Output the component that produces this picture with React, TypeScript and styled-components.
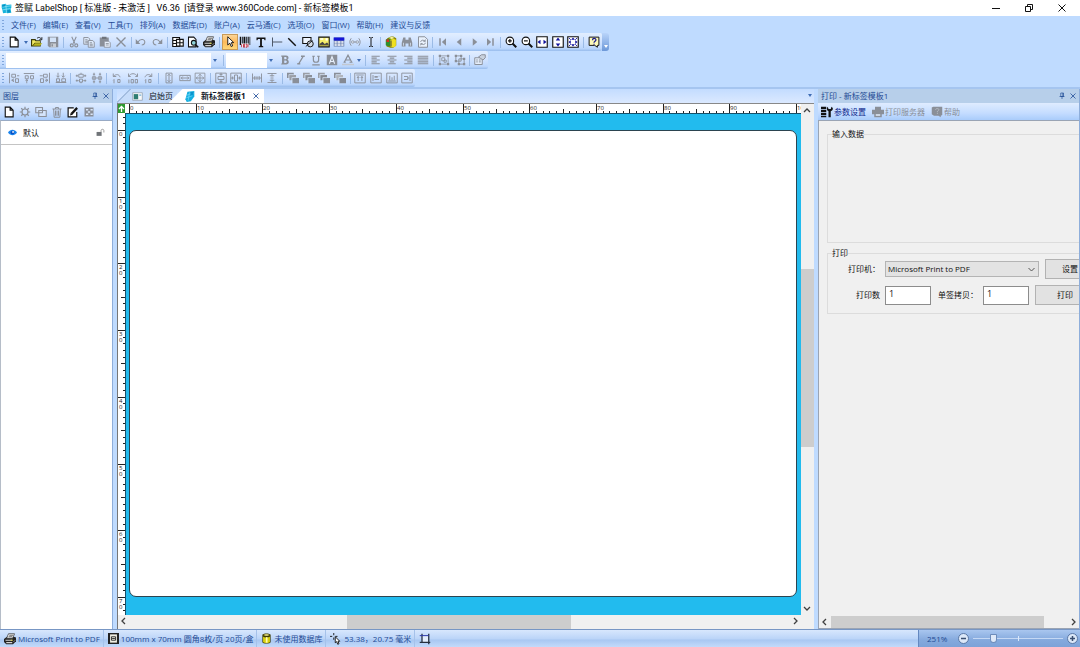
import React, { ReactNode } from 'react';
import styled, { createGlobalStyle } from 'styled-components';

const uiFont = `"Open Sans", "Noto Sans CJK SC", sans-serif`;
const titleFont = `Roboto, "Noto Sans CJK SC", sans-serif`;
const ink = '#1e4a94';

const GlobalStyle = createGlobalStyle`
  * { box-sizing: border-box; }
  html, body { margin: 0; padding: 0; }
  body { font: 8px/12px ${uiFont}; color: #111; background: #bfdbff; overflow: hidden; }
  button, input, select { font: inherit; color: inherit; margin: 0; padding: 0; border-radius: 0; }
  button { border: 0; background: none; cursor: default; }
`;

/* ---------- icons, drawn on a 16 x 16 grid ---------- */

const g = '#8a8f98';
const k = '#111';
const S = (d: string, c = g, w = 1.4) => <path d={d} stroke={c} strokeWidth={w} fill="none" />;
const F = (d: string, c = g) => <path d={d} fill={c} />;

const stackShape = (a: string, b: string, c: string) => (
  <>
    {F('M0 1h9v7H0z', a)}
    {F('M3 4h9v7H3z', b)}
    {F('M7 8h9v7H7z', c)}
    {S('M2.500 11V3.500H9M6.500 15V7.500H12', '#dbe9fc', 1)}
  </>
);

const icons: Record<string, ReactNode> = {
  newDoc: <path d="M3 1.5h6.5l4 4v9H3zM9.500 1.500v4h4" fill="#fff" stroke={k} strokeWidth="1.5" />,
  open: (
    <>
      {F('M0 4h6l1 1.500h6V14H0z', '#3b3a08')}
      {F('M1.500 5.500h3.500l1 1.500h6v2H5l-3.500 4z', '#f2ea62')}
      {F('M5.500 9.500H15L12 13H2.500z', '#b7b31c')}
      {S('M8 3c2-2 5-1 6 1.500M14.500 1.500V5H11', k, 1.1)}
    </>
  ),
  save: (
    <>
      {F('M1 1h14v14H3l-2-2z')}
      {F('M4 2h8v6H4z', '#d3e3f8')}
      {F('M5 10h7v5H5z', '#c9cdd3')}
      {F('M6 11h2v3H6z')}
    </>
  ),
  cut: (
    <>
      {S('M5 1l4 9M11 1L7 10')}
      <circle cx="5" cy="12.500" r="2" fill="none" stroke={g} strokeWidth="1.500" />
      <circle cx="11" cy="12.500" r="2" fill="none" stroke={g} strokeWidth="1.500" />
    </>
  ),
  copy: (
    <>
      <path d="M1 2h6l2 2v7H1zM3 5h3M3 7h4M3 9h4" fill="#dce8f8" stroke={g} strokeWidth="1.200" />
      <path d="M7 6h6l2 2v7H7zM9 9h3M9 11h4M9 13h4" fill="#dce8f8" stroke={g} strokeWidth="1.200" />
    </>
  ),
  paste: (
    <>
      {F('M1 2h12v12H1z')}
      {F('M4 1h6v3H4z', '#6f747c')}
      <path d="M7 7h6l2 2v6H7zM9 10h4M9 12h4" fill="#e6eef9" stroke={g} strokeWidth="1.100" />
    </>
  ),
  del: S('M2 2l12 12M14 2L2 14', g, 1.8),
  undo: (
    <>
      {S('M4 8c3-5 10-4 9 1-.5 2-2 3-4 3')}
      {F('M1 4v6.500h6z')}
    </>
  ),
  redo: (
    <>
      {S('M12 8C9 3 2 4 3 9c.5 2 2 3 4 3')}
      {F('M15 4v6.500H9z')}
    </>
  ),
  database: (
    <>
      <path d="M1 2h9v12H1zM1 6h9M1 10h9" fill="#fff" stroke={k} strokeWidth="1.500" />
      <path d="M6 4.500h9v9H6zM6 9h9M10.500 4.500v9" fill="#fff" stroke={k} strokeWidth="1.500" />
    </>
  ),
  preview: (
    <>
      <path d="M2 1.500h7l3 3v10H2z" fill="#fff" stroke={k} strokeWidth="1.400" />
      <circle cx="9" cy="9" r="3.200" fill="#8fd3d8" stroke={k} strokeWidth="1.400" />
      {S('M11 11.500l4 3.500', k, 2.2)}
    </>
  ),
  printer: (
    <>
      {F('M0 8l4-3h9l3 1v5l-4 4H3l-3-3z', '#222')}
      {F('M6 1h8l-2.500 6H3.500z', '#fff')}
      {S('M6 1h8l-2.500 6H3.500zM7 3h5M6 5h5', '#333', 1)}
      {F('M2 9h9v1.200H2zM3 12h8v1.500H3z', '#d4d4d4')}
      {F('M9 9h2.500v1.200H9z', '#e8e13a')}
      {S('M12.500 12l2.500-2.500', '#aaa', 1)}
    </>
  ),
  pointer: <path d="M5 1v11l2.800-2.500L9.500 14l2-.8-1.700-4.400H13z" fill="#fff" stroke={k} strokeWidth="1.200" />,
  barcode: (
    <>
      {F('M1 1h2v11H1zM4 1h1v11H4zM6 1h2.500v11H6zM9.500 1h1v11h-1zM11.500 1h1.500v11h-1.500zM14 1h1v11h-1z', k)}
      {F('M3 10h10v5H3z', '#fff')}
      {S('M3.500 11v4M6 11h1.500v4H6zM9 11h1.500v4H9M12 11v4', '#b0122a', 1.1)}
    </>
  ),
  text: F('M2 2h12v3.500h-1.200L12 4H9.200v9l1.800.8V15H5v-1.200L6.800 13V4H4l-.8 1.500H2z', k),
  hline: S('M2 2v12M2 8h13', '#4a5566', 1.3),
  line: S('M3 3l10 10', k, 1.8),
  shapes: (
    <>
      <path d="M1 2h11v8H1z" fill="#eef5ff" stroke={k} strokeWidth="1.400" />
      <circle cx="11" cy="10.500" r="4" fill="#d5dde8" stroke={k} strokeWidth="1.300" />
      {S('M5 14L14 6', k, 1.2)}
    </>
  ),
  image: (
    <>
      <path d="M1 1.500h14v13H1z" fill="#f5ee6a" stroke={k} strokeWidth="1.400" />
      {F('M2 13.500v-3l4-3 3 3 3-2 2 2v3z', '#444')}
      {F('M3 3h4v2H3zM10 3h3v3h-3z', '#fff')}
      {S('M2.500 12.500h11', '#d8d040', 1)}
    </>
  ),
  table: (
    <>
      {F('M1 2h14v12H1z', '#6078a8')}
      {F('M1 2h14v4H1z', '#1414d8')}
      {F('M2 7h3v2H2zM6 7h4v2H6zM11 7h3v2h-3zM2 10h3v1.500H2zM6 10h4v1.500H6zM11 10h3v1.500h-3zM2 12.300h3v1H2zM6 12.300h4v1H6zM11 12.300h3v1h-3z', '#fff')}
    </>
  ),
  link: (
    <>
      {S('M3 3C.5 6 .5 10 3 13M13 3c2.500 3 2.500 7 0 10M5 8h6', g, 1.2)}
      <circle cx="5" cy="8" r="1.700" fill="#dfeafa" stroke={g} />
      <circle cx="11" cy="8" r="1.700" fill="#dfeafa" stroke={g} />
    </>
  ),
  caret: S('M5.500 2h1.500l1 1 1-1h1.500M8 3v10M5.500 14h1.500l1-1 1 1h1.500', k, 1.3),
  db: (
    <>
      {F('M3 3l5-2.500h3L15 3v9.500L11 15.500H7L2 14z', '#8a8700')}
      {F('M1 5c0-2 8-2 8 0v7c0 2-8 2-8 0z', '#2f8f2f')}
      {F('M7 5c2-1.500 6-1.500 7.500 0v8c-2 2.500-5 2.500-7.500 1z', '#f0e020')}
      {F('M5 2.500l4-1.500 4 1.500-4 1.500z', '#f8f4a0')}
      {F('M2 4.500h3.500v3.500H2z', '#d83020')}
      {S('M8 6v8', '#333', 1.2)}
    </>
  ),
  find: (
    <>
      {F('M3 2h3v3h4V2h3l2 7v5h-5v-4H6v4H1V9z')}
      {F('M3 9h1v4H3zM12 9h1v4h-1z', '#dce8f8')}
    </>
  ),
  refresh: (
    <>
      <path d="M2 1h8.500L14 4.500V15H2z" fill="#e9f1fc" stroke={g} strokeWidth="1.300" />
      {S('M5 8c0-3 4-3 5-1M11 9c0 3-4 3-5 1', g, 1.3)}
      {F('M8 7.500h3.500V4zM8 9.500H4.500V13z')}
    </>
  ),
  first: F('M3 3h2v10H3zM12 3v10L6.500 8z'),
  prev: F('M11 3v10L5 8z'),
  next: F('M5 3v10l6-5z'),
  last: F('M11 3h2v10h-2zM4 3v10l5.500-5z'),
  zoomIn: (
    <>
      <circle cx="6.500" cy="6.500" r="5" fill="#fff" stroke={k} strokeWidth="1.500" />
      {S('M4 6.500h5M6.500 4v5', k, 1.6)}
      {S('M10 10l5 5', k, 2.6)}
    </>
  ),
  zoomOut: (
    <>
      <circle cx="6.500" cy="6.500" r="5" fill="#fff" stroke={k} strokeWidth="1.500" />
      {S('M4 6.500h5', k, 1.6)}
      {S('M10 10l5 5', k, 2.6)}
    </>
  ),
  fitWidth: (
    <>
      <path d="M1 1h14v14H1z" fill="#fff" stroke={k} strokeWidth="1.500" />
      {F('M2 8l4-3v6zM14 8l-4-3v6z', '#10109c')}
    </>
  ),
  fitHeight: (
    <>
      <path d="M1 1h14v14H1z" fill="#fff" stroke={k} strokeWidth="1.500" />
      {F('M8 2l3 4H5zM8 14l3-4H5z', '#10109c')}
    </>
  ),
  fitAll: (
    <>
      <path d="M1 1h14v14H1z" fill="#fff" stroke={k} strokeWidth="1.500" />
      {F('M8 2l2.500 3h-5zM8 14l2.500-3h-5zM2 8l3-2.500v5zM14 8l-3-2.500v5z', '#10109c')}
      {S('M2.500 2.500l2.500 2.500M13.500 2.500L11 5M2.500 13.500L5 11M13.500 13.500L11 11', '#10109c', 1.2)}
    </>
  ),
  help: (
    <>
      <path d="M1.500 1.500h13v11h-2V15L9 12.500H1.500z" fill="#fdf9b8" stroke={k} strokeWidth="1.300" />
      {S('M6 5.500c0-3 5-3 4.500 0C10.300 7 8 7 8 9M8 10.200v1.600', '#1a1a90', 1.7)}
    </>
  ),
  bold: F('M3 2h6.500c4 0 4 5 1.500 5.600 3 .7 3 6.400-1.500 6.400H3v-1.500h1v-9H3zM7 4v3h2c1.500 0 1.500-3 0-3zm0 4.800V12h2c2 0 2-3.200 0-3.200z'),
  italic: S('M8 3h5M11 3L5 13M3 13h4', g, 1.8),
  underline: S('M3 3h3.500M9.500 3H13M4.500 3v5c0 4 7 4 7 0V3M3 14.500h10', g, 1.6),
  reverse: (
    <>
      {F('M1 1h14v14H1z')}
      {S('M4.500 13L8 3.500l3.500 9.500M5.500 10h5', '#e8f0fb', 1.5)}
    </>
  ),
  color: (
    <>
      {S('M3 11L8 1.500l5 9.500M5 8h6M2 11h3M10 11h4', g, 1.6)}
      {F('M0 13h16v2H0z', '#c3c8d0')}
    </>
  ),
  alignL: S('M2 3h11M2 5.500h7M2 8h11M2 10.500h7M2 13h11'),
  alignC: S('M2 3h12M5 5.500h6M2 8h12M5 10.500h6M3 13h10'),
  alignR: S('M3 3h11M7 5.500h7M3 8h11M7 10.500h7M3 13h11'),
  alignJ: S('M1 3h14M1 5.500h14M1 8h14M1 10.500h14M1 13h14'),
  group: (
    <>
      {S('M2.500 2.500h11v11h-11z', g, 1)}
      {F('M1 1h3v3H1zM12 1h3v3h-3zM1 12h3v3H1zM12 12h3v3h-3z')}
      {S('M5 5h4v4H5zM8 8h3v3H8z', g, 1.1)}
    </>
  ),
  ungroup: (
    <>
      {S('M2.500 2.500h7v7h-7zM6.500 6.500h7v7h-7z', g, 1.2)}
      {F('M1 1h3v3H1zM8 1h3v3H8zM1 8h3v3H1zM12 5h3v3h-3zM5 12h3v3H5zM12 12h3v3h-3z')}
    </>
  ),
  props: (
    <>
      <path d="M1 5h10v9H1zM3 8h2M6.500 8H9M3 10.500h2M6.500 10.500H9" fill="#e5eefb" stroke={g} strokeWidth="1.300" />
      <path d="M6 4l4-3h5v4l-3 3-3-2z" fill="#c9d2de" stroke={g} strokeWidth="1.300" />
    </>
  ),
  oLeft: S('M2 1v14M5 3h5v4H5zM5 11h3M12 5h3M10 9v5h4V9zM8 9l-3 2 3 2', g, 1.2),
  oTop: S('M1 2h14M3 5h4v4H3zM10 5h4v4h-4zM5 10v5M12 10v5M3.500 12L5 10l1.500 2', g, 1.2),
  oRight: S('M14 1v14M6 3h5v4H6zM1 5h4M8 11h4M2 9h4v5H2zM9 9l3 2-3 2', g, 1.2),
  oBottom: S('M1 14h14M2 9h4v4H2zM9 9h5v4H9zM4 1v6M11 1v6M2 5l2 2 2-2M9 5l2 2 2-2', g, 1.2),
  oCenterH: S('M8 1v2M8 13v2M5 3h6v4H5zM1 5h3M12 5h3M6 9.500h4v4H6zM1 11.500h4M11 11.500h4M2.500 3.500v3M13.500 3.500v3M2.500 10v3M13.500 10v3', g, 1.2),
  oCenterV: S('M1 8h14M2.500 5.500h3v5h-3zM10.500 5.500h3v5h-3zM4 1v3M12 1v3M4 12v3M12 12v3M2.500 3h3M10.500 3h3M2.500 13h3M10.500 13h3', g, 1.2),
  rot90: S('M3 2v4h4M3 6c4-4 8-3 9 1M4 10v5M3 11l1-1M9 10h3v4H9z', g, 1.2),
  rot180: S('M2 2v4h3M14 2v4h-3M2 6c3-5 9-5 12 0M2.500 10v5M5.500 10h3v4.500h-3zM11 10h3v4.500h-3z', g, 1.2),
  rot270: S('M13 2v4H9M13 6C10 2 5 3 4 7M5 10v5M4 11l1-1M9 10h3v4H9z', g, 1.2),
  sameH: S('M4 1.500h8v13H4zM8 3v10M6 5l2-2 2 2M6 11l2 2 2-2', g, 1.2),
  sameW: S('M1 4.500h14v7H1zM3 8h10M5 6L3 8l2 2M11 6l2 2-2 2', g, 1.2),
  sameBoth: S('M1.500 1.500h13v13h-13zM8 3v10M3 8h10M6 5l2-2 2 2M6 11l2 2 2-2M5 6L3 8l2 2M11 6l2 2-2 2', g, 1.1),
  pageH: S('M1 1.500h14v13H1zM4 6h8v4H4zM8 1v4M8 11v4M6 3.500h4M6 12.500h4', g, 1.2),
  pageV: S('M1 1.500h14v13H1zM6 4h4v8H6zM1 8h4M11 8h4M3.500 6v4M12.500 6v4', g, 1.2),
  spaceH: S('M2 2v12M14 2v12M2 8h4M10 8h4M5 5.500v5M11 5.500v5M7 6v4M9 6v4', g, 1.2),
  spaceV: S('M2 2h12M2 14h12M8 2v4M8 10v4M5 5h6M5 11h6M6 8h4', g, 1.2),
  front: stackShape('#8a8f98', '#9a9ea6', '#8a8f98'),
  back: stackShape('#9a9ea6', '#8a8f98', '#8a8f98'),
  forward: stackShape('#9a9ea6', '#848992', '#8a8f98'),
  backward: stackShape('#8a8f98', '#b0b4bb', '#848992'),
  pTop: S('M1 1.500h14v13H1zM3 4h10M5.500 12V6M10.500 12V6M4 8l1.500-2L7 8M9 8l1.500-2L12 8', g, 1.2),
  pLeft: S('M1 1.500h14v13H1zM4 4v8M6 6h4v1H6M6 10h6M12 5v1', g, 1.2),
  pBottom: S('M1 1.500h14v13H1zM3 12h10M5 5v6M8 7v4M11 5v6', g, 1.2),
  pRight: S('M1 1.500h14v13H1zM12 4v8M4 6h5v4H4M9 8h2', g, 1.2),
  gear: (
    <>
      <circle cx="8" cy="8" r="4" fill="none" stroke={g} strokeWidth="1.600" />
      {S('M8 1v3M8 12v3M1 8h3M12 8h3M3 3l2 2M11 11l2 2M13 3l-2 2M5 11l-2 2', g, 1.6)}
    </>
  ),
  dup: <path d="M1 2h9v7H1zM5 6h10v8H5z" fill="#d4e4fb" stroke={g} strokeWidth="1.400" />,
  trash: S('M2 4h12M6 4V2h4v2M3.500 4l.7 11h7.600l.7-11M6 6v7M8 6v7M10 6v7', g, 1.3),
  edit: (
    <>
      <path d="M13 8v6.500H1.500v-12H9" fill="#fff" stroke={k} strokeWidth="1.600" />
      {S('M6 10.500l7.500-8', k, 3)}
      {F('M4 12.500l1-3.500 2.500 2.500z', k)}
    </>
  ),
  checker: (
    <>
      {F('M2 2h12v12H2z')}
      {F('M4 4h3v2H4zM10 4h3v2h-3zM6.500 7h3v2h-3zM4 10h3v2H4zM10 10h3v2h-3z', '#d9e6f8')}
    </>
  ),
  eye: (
    <>
      {F('M0 8c4-6.500 12-6.500 16 0-4 6.500-12 6.500-16 0z', '#1c86ee')}
      <circle cx="8" cy="8" r="3.300" fill="#0a4ec0" />
      <circle cx="9" cy="7" r="1.600" fill="#fff" />
    </>
  ),
  unlock: (
    <>
      {F('M1 7h9v7H1z', '#707478')}
      {S('M9 7V4.500c0-3 5-3 5 0V8', '#888', 1.4)}
    </>
  ),
  pin: S('M5.500 2H11v7H5.500zM3 9h10M8 9v5M9.500 2v7', ink, 1.3),
  close: S('M3 3l10 10M13 3L3 13', '#3a62a4', 1.9),
  logo: (
    <>
      {F('M1 2l6-1 1 2 7-1v5l-1 2 1 5-6 1-1-1-5 1-1-5-1-3z', '#16b3dc')}
      {S('M2 6l6-1 7-1M2 10l12-2M7 2l1 12', '#a8ecfa', .9)}
      {F('M2 3l4-.5.500 2-4.500.8zM9 10.500l4-.7.5 3.500-4 .5z', '#0c8fc0')}
    </>
  ),
  tag: (
    <>
      {F('M5 1l10-1v8l-5 7-6 1-2-4z', '#14aee0')}
      {S('M4 6l10-3M3 10l9-3M8 2L6 14', '#7adcf8', .9)}
      {F('M10 1.500h4l-1 4-4 1z', '#0d93cc')}
    </>
  ),
  home: (
    <>
      <path d="M1 2.500h14v11H1z" fill="#f8f8f8" stroke="#8b97a8" />
      {F('M2.500 4.500H9v7.500H2.500z', '#2f7d72')}
      {F('M10.500 5h3v2h-3z', '#7fb6d8')}
    </>
  ),
  params: (
    <>
      {F('M0 1h7v3H0zM0 5h7v3H0zM0 9h7v3H0zM0 13h7v2H0z', k)}
      {F('M9 1l1 3h3l1-3c3 2 2 5-1 6V15h-3V7C7.500 6 7 3 9 1z', k)}
    </>
  ),
  server: (
    <>
      {F('M4 1h8v4H4zM0 5h16v6H0zM3 9h10v6H3z')}
      {F('M5 11h6v2H5z', '#e1ecfb')}
    </>
  ),
  book: (
    <>
      {F('M1 2l2-1h12v11l-2 1v2l-3-2H4l-3-2z')}
      {S('M6 5c0-2 5-2 4.500 0-.5 1.500-2 1-2 3M8.500 9v1.500', '#b7bcc4', 1.2)}
    </>
  ),
  page: (
    <>
      {F('M0 0h16v16H0z', '#222')}
      {F('M3 2h10v12H3z', '#f0efe4')}
      {S('M5 5.500h6v5H5zM6 8h4', '#222', 1.3)}
    </>
  ),
  cylinder: (
    <>
      {F('M2 3c0-3 12-3 12 0v10c0 3-12 3-12 0z', '#3c3a04')}
      {F('M3 5c2 2 8 2 10 0v8c-2 2-8 2-10 0z', '#d8d010')}
      {F('M3.500 3c2-1.500 7-1.500 9 0-2 1.500-7 1.500-9 0z', '#f6f28a')}
      {F('M7 6h2.500v8H7z', '#fffbb0')}
    </>
  ),
  coords: (
    <>
      {S('M5 0v3M5 6v3M0 4.500h3M7 4.500h3', k, 1.2)}
      <path d="M7 5v8l2-1.500 1.300 3.500 1.700-.7-1.300-3.300H13z" fill="#fff" stroke={k} strokeWidth="1.200" />
    </>
  ),
  frame: (
    <>
      <path d="M4 3.500h9v9H4z" fill="#e4eefc" />
      {S('M4 1v12M13 1v14M1 12.500h14', '#26303e', 1.7)}
      {S('M1 3.500h12', '#2a35a8', 1.3)}
    </>
  ),
};

const Svg = styled.svg<{ $size: number }>`
  display: block;
  flex: none;
  width: ${(p) => p.$size}px;
  height: ${(p) => p.$size}px;
`;
const Icon = ({ name, size = 12 }: { name: string; size?: number }) => (
  <Svg $size={size} viewBox="0 0 16 16" aria-hidden="true">
    {icons[name]}
  </Svg>
);

/* ---------- window frame ---------- */

const Window = styled.div`
  height: 100vh;
  display: flex;
  flex-direction: column;
  overflow: hidden;
`;
const TitleBar = styled.header`
  height: 16px;
  flex: none;
  display: flex;
  align-items: center;
  padding: 0 2px 0 1px;
  background: #fff;
  font: 9px/16px ${titleFont};
`;
const Title = styled.h1`
  flex: 1;
  margin: 0;
  padding-left: 3px;
  font: inherit;
  white-space: pre;
  color: #000;
`;
const CaptionButton = styled.button`
  width: 33px;
  height: 16px;
  display: grid;
  place-items: center;
`;
const MenuBar = styled.nav`
  height: 17px;
  flex: none;
  display: flex;
  align-items: center;
  gap: 7px;
  padding: 1px 0 0 2px;
`;
const MenuButton = styled.button`
  color: ${ink};
  white-space: nowrap;
`;
const Grip = styled.span`
  width: 2px;
  height: 10px;
  flex: none;
  background: repeating-linear-gradient(#7fa6dc 0 1px, transparent 1px 3px);
`;
const ToolbarRow = styled.div`
  height: 18px;
  flex: none;
  display: flex;
`;
const Toolbar = styled.div<{ $width: number }>`
  width: ${(p) => p.$width}px;
  display: flex;
  align-items: center;
  padding-left: 2px;
  background: linear-gradient(#e2eeff, #cfe2ff 50%, #bcd7fd 85%, #98bcec);
  border-radius: 0 2px 2px 0;
  ${Grip} { margin-right: 2px; }
`;
const ToolButton = styled.button<{ $active?: boolean }>`
  flex: 1 1 0;
  min-width: 0;
  height: 16px;
  display: grid;
  place-items: center;
  ${(p) =>
    p.$active &&
    `background: linear-gradient(#fbd9a0, #fdb95a 50%, #fddc7e); box-shadow: inset 0 0 0 1px #c89a58;`}
`;
const Divider = styled.span`
  width: 1px;
  height: 11px;
  flex: none;
  margin: 0 2px;
  background: #9bbbe6;
`;
const Triangle = styled.span<{ $color?: string }>`
  display: block;
  border: 2px solid transparent;
  border-top: 3px solid ${(p) => p.$color ?? '#3f6db5'};
  border-bottom: 0;
`;
const DropButton = styled.button`
  width: 8px;
  height: 16px;
  flex: none;
  display: grid;
  place-items: center;
`;
const OverflowCap = styled.button`
  width: 7px;
  height: 18px;
  display: flex;
  flex-direction: column;
  justify-content: flex-end;
  align-items: center;
  padding-bottom: 3px;
  background: linear-gradient(#b9d4fa, #6c98d8);
  border-radius: 0 3px 3px 0;
`;
const Combo = styled.div<{ $width: number }>`
  width: ${(p) => p.$width}px;
  height: 15px;
  flex: none;
  display: flex;
  margin-right: 2px;
`;
const ComboInput = styled.input`
  flex: 1;
  min-width: 0;
  border: 0;
  background: #fff;
`;

/* ---------- panels ---------- */

const Workspace = styled.main`
  flex: 1;
  min-height: 0;
  display: flex;
  gap: 4px;
  border-top: 2px solid #a5c5f0;
`;
const Panel = styled.section<{ $width: number }>`
  width: ${(p) => p.$width}px;
  flex: none;
  min-width: 0;
  display: flex;
  flex-direction: column;
  border-right: 1px solid #8eaedb;
`;
const PanelHead = styled.header`
  height: 14px;
  flex: none;
  display: flex;
  align-items: center;
  gap: 3px;
  padding: 0 2px 0 3px;
  background: #b7cfea;
  color: ${ink};
`;
const PanelTitle = styled.h2`
  flex: 1;
  margin: 0;
  font: inherit;
`;
const MiniButton = styled.button`
  width: 8px;
  height: 10px;
  display: grid;
  place-items: center;
`;
const PanelTools = styled.div<{ $gap: number }>`
  height: 17px;
  flex: none;
  display: flex;
  align-items: center;
  gap: ${(p) => p.$gap}px;
  padding: 0 3px;
  background: linear-gradient(#dfecff, #c4dcff 60%, #a9ccfb);
`;
const PanelTool = styled.button<{ $off?: boolean }>`
  display: flex;
  align-items: center;
  gap: 1px;
  color: ${(p) => (p.$off ? '#8a8f98' : '#10288c')};
`;
const LayerList = styled.ul`
  flex: 1;
  margin: 0;
  padding: 0;
  list-style: none;
  background: #fff;
  border-left: 1px solid #b5bdc8;
  border-top: 1px solid #98aac4;
`;
const LayerItem = styled.li`
  height: 24px;
  display: flex;
  align-items: center;
  padding: 0 7px;
  gap: 6px;
  border-bottom: 1px solid #c4c4c4;
`;
const LayerName = styled.span`
  flex: 1;
`;

/* ---------- document ---------- */

const Doc = styled.section`
  flex: 1;
  min-width: 0;
  display: flex;
  flex-direction: column;
`;
const TabStrip = styled.div`
  height: 14px;
  flex: none;
  display: flex;
  align-items: flex-end;
  background: linear-gradient(#c3dcff, #dbe9ff);
`;
const Tab = styled.button<{ $active?: boolean }>`
  height: 14px;
  display: flex;
  align-items: center;
  gap: 6px;
  padding: 0 4px 0 15px;
  color: #101828;
  font-weight: ${(p) => (p.$active ? 700 : 400)};
  background: ${(p) =>
    p.$active
      ? 'linear-gradient(135deg, transparent 9px, #fff 10px)'
      : 'linear-gradient(135deg, transparent 9px, #a3bde0 9px, #a3bde0 10px, #c6dcfa 10px)'};
  & + & { margin-left: -8px; }
`;
const TabSpacer = styled.span`
  flex: 1;
`;
const Sheet = styled.div`
  flex: 1;
  min-height: 0;
  display: grid;
  grid-template-columns: minmax(0, 1fr) 13px;
  grid-template-rows: minmax(0, 1fr) 14px;
  border-left: 1px solid #777;
  border-top: 1px solid #888;
  background: #f0f0f0;
`;
const Board = styled.div`
  display: grid;
  grid-template-columns: 7px minmax(0, 1fr);
  grid-template-rows: 9px minmax(0, 1fr);
  overflow: hidden;
  background: #fff;
`;
const Corner = styled.div`
  display: grid;
  place-items: center;
  background: #2f9a32;
`;
const RulerTop = styled.svg`
  width: 100%;
  height: 9px;
  display: block;
`;
const RulerSide = styled.svg`
  width: 7px;
  height: 100%;
  display: block;
`;
const Canvas = styled.div`
  display: flex;
  padding: 16px 4px 18px 3px;
  background: #22bbee;
  border-top: 1px solid #16506a;
  border-left: 1px solid #16506a;
`;
const Label = styled.div`
  flex: 1;
  background: #fff;
  border: 1px solid #2b4450;
  border-radius: 7px;
`;

const Scroll = styled.div<{ $vertical?: boolean }>`
  display: flex;
  flex-direction: ${(p) => (p.$vertical ? 'column' : 'row')};
  min-width: 0;
  min-height: 0;
  background: #f0f0f0;
`;
const ScrollArrow = styled.button`
  width: 12px;
  height: 12px;
  flex: none;
  display: grid;
  place-items: center;
`;
const Track = styled.div<{ $grow: number }>`
  flex: ${(p) => p.$grow} 1 0;
`;
const Thumb = styled(Track)`
  background: #cdcdcd;
`;

const arrows = { up: 'M1 6l3-3 3 3', down: 'M1 2l3 3 3-3', left: 'M5 1L2 4l3 3', right: 'M3 1l3 3-3 3' };
const Arrow = ({ dir }: { dir: keyof typeof arrows }) => (
  <ScrollArrow type="button" aria-label={dir}>
    <svg width="8" height="8" viewBox="0 0 8 8">
      <path d={arrows[dir]} fill="none" stroke="#404040" strokeWidth="1.3" />
    </svg>
  </ScrollArrow>
);
const ScrollBar = ({ vertical, parts }: { vertical?: boolean; parts: [number, number, number] }) => (
  <Scroll $vertical={vertical}>
    <Arrow dir={vertical ? 'up' : 'left'} />
    <Track $grow={parts[0]} />
    <Thumb $grow={parts[1]} />
    <Track $grow={parts[2]} />
    <Arrow dir={vertical ? 'down' : 'right'} />
  </Scroll>
);

/* ---------- print form ---------- */

const FormPane = styled.form`
  flex: 1;
  min-height: 0;
  display: flex;
  flex-direction: column;
  overflow: hidden;
  border: 1px solid #9aa4b4;
  border-right: 0;
  background: #f0f0f0;
`;
const FormBody = styled.div`
  flex: 1;
  min-height: 0;
  width: 300px;
  padding: 7px 8px;
`;
const Group = styled.fieldset<{ $height: number }>`
  height: ${(p) => p.$height}px;
  margin: 0 0 4px;
  padding: 0 0 0 8px;
  border: 1px solid #dcdcdc;
`;
const Legend = styled.legend`
  margin-left: -4px;
  padding: 0;
`;
const FormRow = styled.div`
  display: flex;
  align-items: center;
  height: 20px;
  margin-bottom: 6px;
`;
const FieldLabel = styled.label<{ $width: number }>`
  width: ${(p) => p.$width}px;
  flex: none;
  padding-right: 5px;
  text-align: right;
  white-space: nowrap;
`;
const PrinterSelect = styled.div`
  width: 154px;
  height: 16px;
  flex: none;
  display: flex;
  align-items: center;
  padding-right: 3px;
  border: 1px solid #b4b4b4;
  background: #e3e3e3;
  select {
    flex: 1;
    height: 14px;
    min-width: 0;
    padding-left: 2px;
    appearance: none;
    border: 0;
    background: none;
  }
`;
const NumberInput = styled.input`
  width: 46px;
  height: 19px;
  flex: none;
  padding: 0 3px 3px;
  border: 1px solid #8c8c8c;
  background: #fff;
  font-size: 9px;
`;
const PushButton = styled.button<{ $width: number }>`
  width: ${(p) => p.$width}px;
  height: 20px;
  flex: none;
  margin-left: 6px;
  border: 1px solid #b2b2b2;
  background: #e2e2e2;
`;

/* ---------- status bar ---------- */

const StatusBar = styled.footer`
  height: 18px;
  flex: none;
  display: flex;
  align-items: stretch;
  background: linear-gradient(#d8e7fd, #bcd5f8 50%, #a9c8f2 60%, #c3dafa);
  border-top: 1px solid #7796c4;
  color: ${ink};
`;
const StatusItem = styled.span`
  display: flex;
  align-items: center;
  gap: 2px;
  padding: 0 3px 0 4px;
  border-right: 1px solid #a5c2ea;
  white-space: nowrap;
  &:last-of-type { border-right: 0; }
`;
const ZoomBox = styled.label`
  width: 162px;
  margin-left: auto;
  display: flex;
  align-items: center;
  padding: 0 2px 0 8px;
  gap: 4px;
  background: linear-gradient(#a9c6ef, #84a9dd 60%, #7ca2d8);
  border-left: 1px solid #6488c0;
`;
const ZoomValue = styled.output`
  width: 27px;
`;
const RoundButton = styled.button`
  width: 11px;
  height: 11px;
  flex: none;
  display: grid;
  place-items: center;
  border: 1px solid #5a78a6;
  border-radius: 50%;
  background: #dce8f8;
`;
const ZoomRange = styled.input`
  flex: 1;
  min-width: 0;
  height: 12px;
  appearance: none;
  background:
    linear-gradient(#dbe8fa, #dbe8fa) 50% 50% / 1px 5px no-repeat,
    linear-gradient(#c5d8f4, #c5d8f4) 0 50% / 100% 1px no-repeat;
  &::-webkit-slider-thumb {
    appearance: none;
    width: 7px;
    height: 9px;
    border: 1px solid #6d8cba;
    border-radius: 1px 1px 4px 4px;
    background: #dfe9f8;
  }
`;

/* ---------- data ---------- */

const menus = ['文件(F)', '编辑(E)', '查看(V)', '工具(T)', '排列(A)', '数据库(D)', '账户(A)', '云马通(C)', '选项(O)', '窗口(W)', '帮助(H)', '建议与反馈'];
const mainTools =
  'newDoc > open save | cut copy paste del | undo redo | database preview printer | pointer barcode text hline line shapes image table link caret | db find refresh | first prev next last | zoomIn zoomOut fitWidth fitHeight fitAll | help';
const textTools = 'bold italic underline reverse color > | alignL alignC alignR alignJ | group ungroup | props';
const arrangeTools =
  'oLeft oTop oRight oBottom | oCenterH oCenterV | rot90 rot180 rot270 | sameH sameW sameBoth | pageH pageV | spaceH spaceV | front back forward backward | pTop pLeft pBottom pRight';
const layerTools = ['newDoc', 'gear', 'dup', 'trash', 'edit', 'checker'];

const Tools = ({ spec }: { spec: string }) => (
  <>
    {spec.split(' ').map((t, i) =>
      t === '|' ? (
        <Divider key={i} />
      ) : t === '>' ? (
        <DropButton key={i} aria-label="more"><Triangle /></DropButton>
      ) : (
        <ToolButton key={i} $active={t === 'pointer'} aria-label={t}><Icon name={t} /></ToolButton>
      ),
    )}
  </>
);

const MM = 6.67;
const ticks = Array.from({ length: 104 }, (_, i) => i - 2);
const tickLength = (n: number) => (n % 10 === 0 ? 9 : n % 5 === 0 ? 4 : 2);

const HorizontalRuler = () => (
  <RulerTop fontSize="6" fill="#222">
    {ticks.filter((n) => n >= 0).map((n) => (
      <rect key={n} x={Math.round(4 + n * MM)} y={9 - tickLength(n)} width="1" height={tickLength(n)} />
    ))}
    {ticks.filter((n) => n >= 0 && n % 10 === 0).map((n) => (
      <text key={n} x={Math.round(5 + n * MM)} y="6">{n}</text>
    ))}
  </RulerTop>
);
const VerticalRuler = () => (
  <RulerSide fontSize="6" fill="#222">
    {ticks.filter((n) => n < 73).map((n) => (
      <rect key={n} x={7 - Math.min(7, tickLength(n))} y={Math.round(17 + n * MM)} width={tickLength(n)} height="1" />
    ))}
    {ticks.filter((n) => n >= 0 && n < 73 && n % 10 === 0).map((n) =>
      String(n).split('').map((c, i) => (
        <text key={`${n}-${i}`} x="1" y={Math.round(23 + n * MM + i * 6)}>{c}</text>
      )),
    )}
  </RulerSide>
);

const PanelButtons = () => (
  <>
    <MiniButton type="button" aria-label="固定"><Icon name="pin" size={8} /></MiniButton>
    <MiniButton type="button" aria-label="关闭"><Icon name="close" size={8} /></MiniButton>
  </>
);

export default function App() {
  return (
    <Window>
      <GlobalStyle />
      <TitleBar>
        <Icon name="logo" size={11} />
        <Title>{'签赋 LabelShop [ 标准版 - 未激活 ]   V6.36  [请登录 www.360Code.com] - 新标签模板1'}</Title>
        <CaptionButton aria-label="最小化">
          <svg width="8" height="8"><path d="M0 4.500h8" stroke="#111" /></svg>
        </CaptionButton>
        <CaptionButton aria-label="还原">
          <svg width="8" height="8"><path d="M.5 2.500h5v5h-5zM2.500 2.500v-2h5v5h-2" fill="none" stroke="#111" /></svg>
        </CaptionButton>
        <CaptionButton aria-label="关闭">
          <svg width="8" height="8"><path d="M.5 .5l7 7M7.500 .5l-7 7" stroke="#111" /></svg>
        </CaptionButton>
      </TitleBar>

      <MenuBar>
        <Grip />
        {menus.map((m) => <MenuButton key={m}>{m}</MenuButton>)}
      </MenuBar>

      <ToolbarRow>
        <Toolbar $width={602}>
          <Grip />
          <Tools spec={mainTools} />
        </Toolbar>
        <OverflowCap aria-label="工具栏选项"><Triangle $color="#fff" /></OverflowCap>
      </ToolbarRow>
      <ToolbarRow>
        <Toolbar $width={488}>
          <Grip />
          <Combo $width={213}>
            <ComboInput aria-label="字体" />
            <DropButton aria-label="选择字体"><Triangle /></DropButton>
          </Combo>
          <Divider />
          <Combo $width={49}>
            <ComboInput aria-label="字号" />
            <DropButton aria-label="选择字号"><Triangle /></DropButton>
          </Combo>
          <Tools spec={textTools} />
        </Toolbar>
      </ToolbarRow>
      <ToolbarRow>
        <Toolbar $width={415}>
          <Grip />
          <Tools spec={arrangeTools} />
        </Toolbar>
      </ToolbarRow>

      <Workspace>
        <Panel $width={113}>
          <PanelHead>
            <PanelTitle>图层</PanelTitle>
            <PanelButtons />
          </PanelHead>
          <PanelTools $gap={4}>
            {layerTools.map((t) => <PanelTool key={t} aria-label={t}><Icon name={t} /></PanelTool>)}
          </PanelTools>
          <LayerList>
            <LayerItem>
              <Icon name="eye" size={9} />
              <LayerName>默认</LayerName>
              <Icon name="unlock" size={9} />
            </LayerItem>
          </LayerList>
        </Panel>

        <Doc>
          <TabStrip>
            <Tab><Icon name="home" size={11} />启始页</Tab>
            <Tab $active>
              <Icon name="tag" size={11} />新标签模板1<Icon name="close" size={8} />
            </Tab>
            <TabSpacer />
            <DropButton aria-label="标签列表"><Triangle /></DropButton>
          </TabStrip>
          <Sheet>
            <Board>
              <Corner>
                <svg width="7" height="7"><path d="M3.500 7V2M1 4l2.500-2.500L6 4" fill="none" stroke="#fff" strokeWidth="1.300" /></svg>
              </Corner>
              <HorizontalRuler />
              <VerticalRuler />
              <Canvas><Label /></Canvas>
            </Board>
            <ScrollBar vertical parts={[153, 177, 156]} />
            <ScrollBar parts={[217, 225, 218]} />
          </Sheet>
        </Doc>

        <Panel $width={262}>
          <PanelHead>
            <PanelTitle>打印 - 新标签模板1</PanelTitle>
            <PanelButtons />
          </PanelHead>
          <PanelTools $gap={6}>
            <PanelTool><Icon name="params" />参数设置</PanelTool>
            <PanelTool $off><Icon name="server" />打印服务器</PanelTool>
            <PanelTool $off><Icon name="book" />帮助</PanelTool>
          </PanelTools>
          <FormPane onSubmit={(e) => e.preventDefault()}>
            <FormBody>
              <Group $height={115}><Legend>输入数据</Legend></Group>
              <Group $height={67}>
                <Legend>打印</Legend>
                <FormRow>
                  <FieldLabel $width={49} htmlFor="printer">打印机：</FieldLabel>
                  <PrinterSelect>
                    <select id="printer"><option>Microsoft Print to PDF</option></select>
                    <svg width="7" height="5"><path d="M.5 1l3 3 3-3" fill="none" stroke="#555" /></svg>
                  </PrinterSelect>
                  <PushButton type="button" $width={50}>设置</PushButton>
                </FormRow>
                <FormRow>
                  <FieldLabel $width={49} htmlFor="count">打印数</FieldLabel>
                  <NumberInput id="count" defaultValue="1" />
                  <FieldLabel $width={52} htmlFor="copies">单签拷贝：</FieldLabel>
                  <NumberInput id="copies" defaultValue="1" />
                  <PushButton type="submit" $width={60}>打印</PushButton>
                </FormRow>
              </Group>
            </FormBody>
            <ScrollBar parts={[0, 213, 23]} />
          </FormPane>
        </Panel>
      </Workspace>

      <StatusBar>
        <StatusItem><Icon name="printer" />Microsoft Print to PDF</StatusItem>
        <StatusItem><Icon name="page" size={11} />100mm x 70mm 圆角8枚/页 20页/盒</StatusItem>
        <StatusItem><Icon name="cylinder" size={11} />未使用数据库</StatusItem>
        <StatusItem><Icon name="coords" />53.38，20.75 毫米</StatusItem>
        <StatusItem><Icon name="frame" /></StatusItem>
        <ZoomBox>
          <ZoomValue>251%</ZoomValue>
          <RoundButton type="button" aria-label="缩小">
            <svg width="7" height="7"><path d="M1 3.500h5" stroke="#3a4f70" strokeWidth="1.500" /></svg>
          </RoundButton>
          <ZoomRange type="range" min={0} max={100} defaultValue={20} aria-label="缩放" />
          <RoundButton type="button" aria-label="放大">
            <svg width="7" height="7"><path d="M1 3.500h5M3.500 1v5" stroke="#3a4f70" strokeWidth="1.500" /></svg>
          </RoundButton>
        </ZoomBox>
      </StatusBar>
    </Window>
  );
}
